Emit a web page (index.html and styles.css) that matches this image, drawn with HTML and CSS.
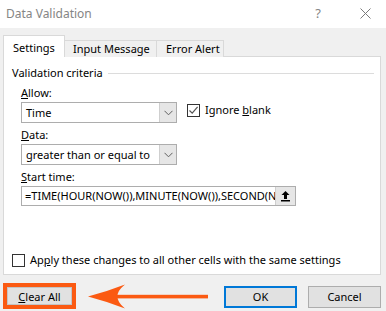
FILE: index.html
```html
<!DOCTYPE html>
<html>
<head>
<meta charset="utf-8">
<link rel="stylesheet" href="styles.css">
</head>
<body>
<div class="window">
  <div class="titlebar">
    <span class="title">Data Validation</span>
    <span class="help">?</span>
    <svg class="close" width="11" height="11" viewBox="0 0 11 11"><path d="M0.5 0.5 L10.5 10.5 M10.5 0.5 L0.5 10.5" stroke="#7a7a7a" stroke-width="1" fill="none"/></svg>
  </div>
  <div class="content">
    <div class="tabs">
      <div class="tab active tab-settings">Settings</div>
      <div class="tab tab-input">Input Message</div>
      <div class="tab tab-error">Error Alert</div>
    </div>
    <div class="panel">
      <div class="legend"><span>Validation criteria</span><span class="rule"></span></div>
      <div class="group">
        <div class="label label-allow"><u>A</u>llow:</div>
        <div class="row">
          <div class="combo"><span class="combo-text">Time</span><span class="drop"><svg width="9" height="6" viewBox="0 0 9 6"><path d="M0.5 0.8 L4.5 4.8 L8.5 0.8" stroke="#606060" stroke-width="1" fill="none"/></svg></span></div>
          <label class="check check-ignore"><span class="box"><svg width="11" height="11" viewBox="0 0 11 11"><path d="M1.5 5.5 L4.2 8.2 L9.6 1.8" stroke="#555" stroke-width="1.2" fill="none"/></svg></span><span>Ignore <u>b</u>lank</span></label>
        </div>
        <div class="label"><u>D</u>ata:</div>
        <div class="combo"><span class="combo-text">greater than or equal to</span><span class="drop"><svg width="9" height="6" viewBox="0 0 9 6"><path d="M0.5 0.8 L4.5 4.8 L8.5 0.8" stroke="#606060" stroke-width="1" fill="none"/></svg></span></div>
        <div class="label"><u>S</u>tart time:</div>
        <div class="input">
          <span class="input-text">=TIME(HOUR(NOW()),MINUTE(NOW()),SECOND(NOW()))</span>
          <span class="ref-btn"><svg width="11" height="12" viewBox="0 0 11 12"><path d="M5.5 1 L1.5 5 L4 5 L4 9 L7 9 L7 5 L9.5 5 Z" fill="#000"/><rect x="1" y="10" width="9" height="1.5" fill="#000"/></svg></span>
        </div>
      </div>
      <label class="check check-apply"><span class="box"></span><span>Ap<u>p</u>ly these changes to all other cells with the same settings</span></label>
    </div>
    <div class="buttons">
      <div class="clear-frame"><div class="btn btn-clear"><u>C</u>lear All</div></div>
      <div class="spacer"></div>
      <div class="btn btn-ok">OK</div>
      <div class="btn btn-cancel">Cancel</div>
    </div>
  </div>
  <svg class="annot-arrow" width="124" height="26" viewBox="86 284 124 26">
    <path d="M88 296.5 Q107 291.5 125 284.5 Q117 291 117.5 296.5 Q117 302 125 308.5 Q107 301.5 88 296.5 Z" fill="#fb5a12"/>
    <rect x="115" y="294.8" width="93" height="3.6" fill="#fb5a12"/>
  </svg>
</div>
</body>
</html>
```
FILE: styles.css
```css
* { box-sizing: border-box; }
html, body { margin: 0; padding: 0; }
body {
  font-family: "Noto Sans", "DejaVu Sans", sans-serif;
  font-size: 11px;
  color: #000;
}
.window {
  position: relative;
  width: 386px;
  height: 311px;
  background: #f0f0f0;
  overflow: hidden;
}
.titlebar {
  height: 28px;
  background: #fff;
  display: flex;
  align-items: center;
  padding-left: 6px;
}
.title {
  font-size: 12px;
  color: #858585;
  flex: 1;
  margin-top: -2px;
}
.help {
  font-size: 13px;
  color: #858585;
  margin-right: 39px;
  margin-top: -2px;
}
.close { margin-right: 15px; margin-top: -2px; }
.content {
  padding: 7px 5px 0 3px;
}
.tabs {
  display: flex;
  align-items: flex-end;
  height: 22px;
  margin-bottom: -1px;
  position: relative;
  z-index: 1;
}
.tab {
  height: 17px;
  line-height: 15px;
  border: 1px solid #d9d9d9;
  border-bottom: none;
  background: #f0f0f0;
  padding-left: 8px;
  white-space: nowrap;
}
.tab.active {
  height: 22px;
  line-height: 24px;
  background: #fff;
  padding-left: 9px;
}
.tab-settings { width: 62px; }
.tab-input { width: 93px; margin-left: -1px; }
.tab-error { width: 68px; margin-left: -1px; padding-left: 9px; }
.panel {
  width: 378px;
  height: 219px;
  background: #fff;
  border: 1px solid #d9d9d9;
  display: flex;
  flex-direction: column;
  padding: 8px 0 6px 8px;
}
.legend {
  display: flex;
  align-items: center;
  height: 16px;
  line-height: 16px;
}
.rule {
  flex: 1;
  height: 1px;
  background: #dcdcdc;
  margin: 0 6px 0 5px;
}
.group {
  padding-left: 9px;
}
.label {
  height: 16px;
  line-height: 16px;
  margin-top: 4px;
  margin-bottom: 1px;
}
.label-allow { margin-top: 4px; }
.row {
  display: flex;
  align-items: flex-start;
}
.combo {
  width: 156px;
  height: 21px;
  border: 1px solid #adadad;
  display: flex;
  background: #fff;
}
.combo-text {
  flex: 1;
  padding-left: 4px;
  line-height: 19px;
  white-space: nowrap;
}
.drop {
  width: 17px;
  height: 19px;
  background: #e6e6e6;
  border-left: 1px solid #cfcfcf;
  display: flex;
  align-items: center;
  justify-content: center;
}
.check {
  display: flex;
  align-items: center;
  line-height: 16px;
}
.box {
  width: 13px;
  height: 13px;
  border: 1px solid #333;
  background: #fff;
  display: flex;
  align-items: center;
  justify-content: center;
  margin-right: 5px;
}
.check-ignore { margin-left: 10px; margin-top: 0px; }
.input {
  width: 275px;
  height: 20px;
  border: 1px solid #adadad;
  display: flex;
  overflow: hidden;
}
.input-text {
  flex: 1;
  padding-left: 3px;
  line-height: 18px;
  white-space: nowrap;
  overflow: hidden;
}
.ref-btn {
  width: 20px;
  height: 18px;
  background: #e6e6e6;
  border-left: 1px solid #cfcfcf;
  display: flex;
  align-items: center;
  justify-content: center;
}
.check-apply { margin-top: auto; height: 16px; }
.buttons {
  display: flex;
  align-items: center;
  margin-top: 8px;
}
.spacer { flex: 1; }
.clear-frame {
  width: 73px;
  height: 26px;
  border: 4px solid #fb5a12;
  padding: 0;
}
.btn {
  height: 22px;
  background: #e1e1e1;
  border: 1px solid #adadad;
  display: flex;
  align-items: center;
  justify-content: center;
  width: 73px;
}
.btn-clear {
  width: 100%;
  height: 100%;
  border: 1px solid #c4c4c4;
}
.btn-ok { border: 2px solid #0078d7; margin-top: 1px; }
.btn-cancel { margin-left: 11px; margin-top: 1px; }
.annot-arrow {
  position: absolute;
  left: 86px;
  top: 284px;
}
```
